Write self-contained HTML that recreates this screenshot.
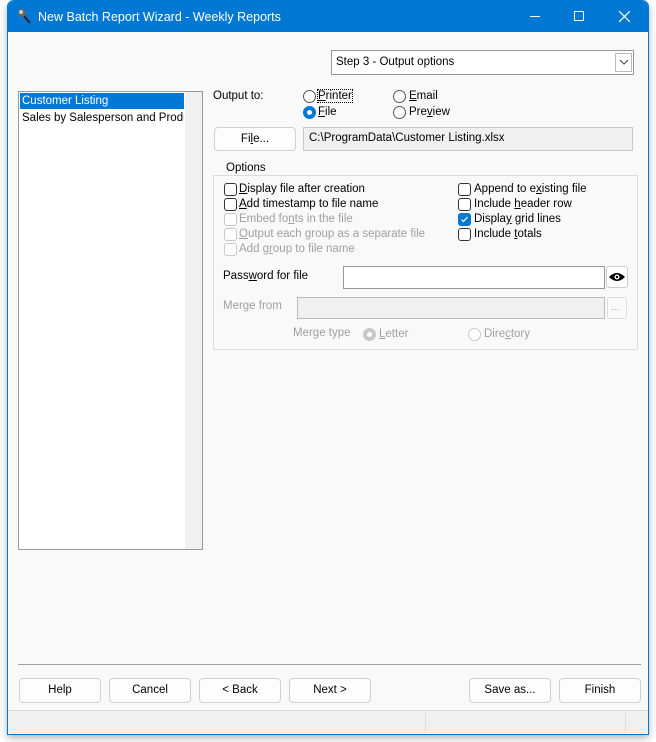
<!DOCTYPE html>
<html><head><style>
*{box-sizing:border-box;margin:0;padding:0}
body{width:656px;height:742px;background:#fff;font-family:"Liberation Sans",sans-serif;font-size:11.5px;color:#000;position:relative;overflow:hidden}
.a{position:absolute}
.win{left:7px;top:0;width:642px;height:735px;background:#f9f9f9;border:1px solid #0078d4;box-shadow:0 3px 8px rgba(0,0,0,.3);border-radius:7px 7px 0 0;overflow:hidden}
.title{left:0;top:0;width:642px;height:31px;background:#0078d4;color:#fff;font-size:12.5px}
.btn{position:absolute;background:#fdfdfd;border:1px solid #d0d0d0;border-radius:4px;text-align:center;line-height:22px}
.cb{position:absolute;width:13px;height:13px;border:1px solid #333;border-radius:3px;background:#fff}
.cb.d{border-color:#c8c8c8}
.t{position:absolute;white-space:nowrap}
.g{color:#a0a0a0}
.r{position:absolute;width:13px;height:13px;border:1px solid #555;border-radius:50%;background:#fff}
u{text-decoration:underline}
</style></head><body>
<div class="a win">
 <div class="a title">
  <svg class="a" style="left:8px;top:7px" width="16" height="16" viewBox="0 0 16 16"><circle cx="6" cy="5" r="4" fill="#666"/><circle cx="5" cy="4" r="2" fill="#ccc"/><line x1="8" y1="8" x2="14" y2="15" stroke="#222" stroke-width="2"/></svg>
  <span class="t" style="left:30px;top:9px">New Batch Report Wizard - Weekly Reports</span>
  <div class="a" style="left:522px;top:15px;width:10px;height:1px;background:#fff"></div>
  <div class="a" style="left:566px;top:10px;width:10px;height:10px;border:1px solid #fff"></div>
  <svg class="a" style="left:611px;top:10px" width="11" height="11"><path d="M0 0L11 11M11 0L0 11" stroke="#fff" stroke-width="1.2"/></svg>
 </div>
</div>
<div class="a" style="left:331px;top:50px;width:303px;height:25px;background:#fff;border:1px solid #999"></div>
<span class="t" style="left:336px;top:56px">Step 3 - Output options</span>
<div class="a" style="left:615px;top:53px;width:17px;height:19px;border:1px solid #bbb;background:#fff"></div>
<svg class="a" style="left:619px;top:59px" width="10" height="6"><path d="M1 1L5 5L9 1" stroke="#444" fill="none"/></svg>

<div class="a" style="left:18px;top:91px;width:185px;height:459px;background:#fff;border:1px solid #999"></div>
<div class="a" style="left:185px;top:92px;width:17px;height:457px;background:#f0f0f0"></div>
<div class="a" style="left:20px;top:93px;width:164px;height:16px;background:#0078d4"></div>
<span class="t" style="left:22px;top:95px;color:#fff">Customer Listing</span>
<span class="t" style="left:22px;top:112px;width:162px;overflow:hidden">Sales by Salesperson and Product</span>

<span class="t" style="left:213px;top:90px">Output to:</span>
<div class="r" style="left:303px;top:90px"></div><span class="t" style="left:318px;top:90px;outline:1px dotted #000"><u>P</u>rinter</span>
<div class="r" style="left:303px;top:106px;border:4px solid #0078d4"></div><span class="t" style="left:318px;top:106px"><u>F</u>ile</span>
<div class="r" style="left:393px;top:90px"></div><span class="t" style="left:409px;top:90px"><u>E</u>mail</span>
<div class="r" style="left:393px;top:106px"></div><span class="t" style="left:409px;top:106px">Pre<u>v</u>iew</span>

<div class="btn" style="left:214px;top:127px;width:82px;height:24px">Fi<u>l</u>e...</div>
<div class="a" style="left:303px;top:127px;width:330px;height:24px;background:#f0f0f0;border:1px solid #c8c8c8"></div>
<span class="t" style="left:309px;top:132px">C:\ProgramData\Customer Listing.xlsx</span>

<div class="a" style="left:213px;top:175px;width:425px;height:175px;border:1px solid #dcdcdc"></div>
<span class="t" style="left:223px;top:162px;background:#f9f9f9;padding:0 3px">Options</span>

<div class="cb" style="left:224px;top:183px"></div><span class="t" style="left:239px;top:183px"><u>D</u>isplay file after creation</span>
<div class="cb" style="left:224px;top:198px"></div><span class="t" style="left:239px;top:198px"><u>A</u>dd timestamp to file name</span>
<div class="cb d" style="left:224px;top:213px"></div><span class="t g" style="left:239px;top:213px">Embed fo<u>n</u>ts in the file</span>
<div class="cb d" style="left:224px;top:228px"></div><span class="t g" style="left:239px;top:228px"><u>O</u>utput each group as a separate file</span>
<div class="cb d" style="left:224px;top:243px"></div><span class="t g" style="left:239px;top:243px">Add g<u>r</u>oup to file name</span>

<div class="cb" style="left:458px;top:183px"></div><span class="t" style="left:474px;top:183px">Append to e<u>x</u>isting file</span>
<div class="cb" style="left:458px;top:198px"></div><span class="t" style="left:474px;top:198px">Include <u>h</u>eader row</span>
<div class="cb" style="left:458px;top:213px;background:#0078d4;border-color:#0078d4"><svg width="11" height="11" style="position:absolute;left:0;top:0"><path d="M2.5 5.5L4.5 7.5L8.5 3" stroke="#fff" fill="none" stroke-width="1.2"/></svg></div><span class="t" style="left:474px;top:213px">Displa<u>y</u> grid lines</span>
<div class="cb" style="left:458px;top:228px"></div><span class="t" style="left:474px;top:228px">Include <u>t</u>otals</span>

<span class="t" style="left:223px;top:270px">Pass<u>w</u>ord for file</span>
<div class="a" style="left:343px;top:266px;width:262px;height:23px;background:#fff;border:1px solid #999"></div>
<div class="a" style="left:606px;top:266px;width:22px;height:22px;border:1px solid #ccc;border-radius:3px;background:#fff"></div>
<svg class="a" style="left:608px;top:271px" width="18" height="12"><path d="M1 6Q9 -2 17 6Q9 14 1 6Z" fill="#000"/><circle cx="9" cy="6" r="2.5" fill="#fff"/><circle cx="9" cy="6" r="1.2" fill="#000"/></svg>

<span class="t g" style="left:223px;top:300px">Merge from</span>
<div class="a" style="left:297px;top:297px;width:308px;height:22px;background:#f0f0f0;border:1px solid #bbb"></div>
<div class="a" style="left:607px;top:297px;width:20px;height:22px;border:1px solid #ddd;border-radius:3px"></div>
<span class="t g" style="left:611px;top:302px;font-size:10px">...</span>

<span class="t g" style="left:293px;top:327px">Merge type</span>
<div class="r" style="left:363px;top:328px;border:4px solid #c8c8c8"></div><span class="t g" style="left:379px;top:328px"><u>L</u>etter</span>
<div class="r" style="left:468px;top:328px;border-color:#c8c8c8"></div><span class="t g" style="left:484px;top:328px">Dire<u>c</u>tory</span>

<div class="a" style="left:18px;top:664px;width:623px;height:1px;background:#a0a0a0"></div>
<div class="btn" style="left:19px;top:678px;width:82px;height:25px">Help</div>
<div class="btn" style="left:109px;top:678px;width:82px;height:25px">Cancel</div>
<div class="btn" style="left:199px;top:678px;width:82px;height:25px">&lt; Back</div>
<div class="btn" style="left:289px;top:678px;width:82px;height:25px">Next &gt;</div>
<div class="btn" style="left:469px;top:678px;width:82px;height:25px">Save as...</div>
<div class="btn" style="left:559px;top:678px;width:82px;height:25px">Finish</div>

<div class="a" style="left:8px;top:710px;width:640px;height:24px;background:#f0f0f0;border-top:1px solid #ddd"></div>
<div class="a" style="left:425px;top:713px;width:1px;height:20px;background:#ddd"></div>
<div class="a" style="left:625px;top:713px;width:1px;height:20px;background:#ddd"></div>
</body></html>
